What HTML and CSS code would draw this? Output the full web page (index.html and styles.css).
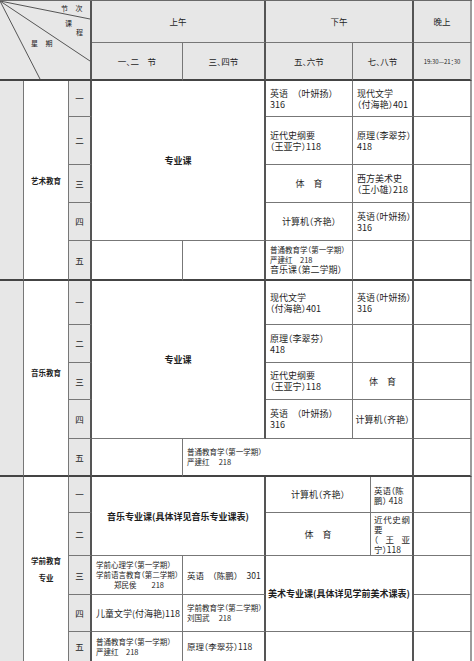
FILE: index.html
```html
<!DOCTYPE html>
<html lang="zh-CN">
<head>
<meta charset="utf-8">
<title>课程表</title>
<link rel="stylesheet" href="styles.css">
</head>
<body>
<div class="sheet">
  <!-- header -->
  <div class="c g diag s3 r2 tr tb">
    <svg class="diag-lines" viewBox="0 0 90 78" preserveAspectRatio="none">
      <line x1="0" y1="0" x2="90" y2="18"/>
      <line x1="0" y1="0" x2="90" y2="60"/>
      <line x1="0" y1="0" x2="40" y2="78"/>
    </svg>
    <span class="dl dl-jc">节 次</span>
    <span class="dl dl-k">课</span>
    <span class="dl dl-c">程</span>
    <span class="dl dl-xq">星 期</span>
  </div>
  <div class="c g ctr h s2 tr">上午</div>
  <div class="c g ctr h s3 tr">下午</div>
  <div class="c g ctr h re">晚上</div>
  <div class="c g ctr h tb">一、二　节</div>
  <div class="c g ctr h tr tb">三、四节</div>
  <div class="c g ctr h tb">五、六节</div>
  <div class="c g ctr h s2 tr tb">七、八节</div>
  <div class="c g ctr time re tb">19:30—21：30</div>

  <!-- 艺术教育 -->
  <div class="c g r5 tb"></div>
  <div class="c ctr nm r5 tb">艺术教育</div>
  <div class="c g ctr day tr">一</div>
  <div class="c ctr bold s2 r4 tr">专业课</div>
  <div class="c l">英语　（叶妍扬）<br>316</div>
  <div class="c l s2 tr">现代文学<br>（付海艳）401</div>
  <div class="c re"></div>

  <div class="c g ctr day tr">二</div>
  <div class="c l">近代史纲要<br>（王亚宁）118</div>
  <div class="c l s2 tr">原理（李翠芬）<br>418</div>
  <div class="c re"></div>

  <div class="c g ctr day tr">三</div>
  <div class="c ctr">体　育</div>
  <div class="c l s2 tr">西方美术史<br>（王小雄）218</div>
  <div class="c re"></div>

  <div class="c g ctr day tr">四</div>
  <div class="c ctr">计算机（齐艳）</div>
  <div class="c l s2 tr">英语（叶妍扬）<br>316</div>
  <div class="c re"></div>

  <div class="c g ctr day tr tb">五</div>
  <div class="c tb"></div>
  <div class="c tr tb"></div>
  <div class="c l sm tb">普通教育学（第一学期）<br>严建红　218<br><span class="big">音乐课（第二学期）</span></div>
  <div class="c s2 tr tb"></div>
  <div class="c re tb"></div>

  <!-- 音乐教育 -->
  <div class="c g r5 tb"></div>
  <div class="c ctr nm nm-up r5 tb">音乐教育</div>
  <div class="c g ctr day tr">一</div>
  <div class="c ctr bold s2 r4 tr">专业课</div>
  <div class="c l">现代文学<br>（付海艳）401</div>
  <div class="c l s2 tr">英语（叶妍扬）<br>316</div>
  <div class="c re"></div>

  <div class="c g ctr day tr">二</div>
  <div class="c l">原理（李翠芬）<br>418</div>
  <div class="c s2 tr"></div>
  <div class="c re"></div>

  <div class="c g ctr day tr">三</div>
  <div class="c l">近代史纲要<br>（王亚宁）118</div>
  <div class="c ctr s2 tr">体　育</div>
  <div class="c re"></div>

  <div class="c g ctr day tr">四</div>
  <div class="c l">英语　（叶妍扬）<br>316</div>
  <div class="c ctr s2 tr">计算机（齐艳）</div>
  <div class="c re"></div>

  <div class="c g ctr day tr tb">五</div>
  <div class="c tb"></div>
  <div class="c l sm s4 tr tb">普通教育学（第一学期）<br>严建红　 218</div>
  <div class="c re tb"></div>

  <!-- 学前教育专业 -->
  <div class="c g r5"></div>
  <div class="c ctr nm nm2 r5">学前教育<br>专业</div>
  <div class="c g ctr day tr">一</div>
  <div class="c ctr bold s2 r2 tr">音乐专业课(具体详见音乐专业课表)</div>
  <div class="c ctr s2">计算机（齐艳）</div>
  <div class="c nr tr"><div>英语（陈</div><div>鹏） 418</div></div>
  <div class="c re"></div>

  <div class="c g ctr day tr">二</div>
  <div class="c ctr s2">体　育</div>
  <div class="c nr tr"><div class="jl">近代史纲</div><div>要</div><div class="jl">（王亚</div><div>宁）118</div></div>
  <div class="c re"></div>

  <div class="c g ctr day tr">三</div>
  <div class="c l sm">学前心理学（第一学期）<br>学前语言教育（第二学期）<br><span class="ind">郑民侯　　218</span></div>
  <div class="c l mid tr">英语　（陈鹏）　301</div>
  <div class="c ctr bold s3 r2 tr">美术专业课(具体详见学前美术课表)</div>
  <div class="c re"></div>

  <div class="c g ctr day tr">四</div>
  <div class="c l">儿童文学(付海艳)118</div>
  <div class="c l sm tr">学前教育学（第二学期）<br>刘国武　 218</div>
  <div class="c re"></div>

  <div class="c g ctr day tr">五</div>
  <div class="c l sm">普通教育学（第一学期）<br>严建红　218</div>
  <div class="c l mid tr">原理（李翠芬）118</div>
  <div class="c s3 tr"></div>
  <div class="c re"></div>
</div>
</body>
</html>
```

FILE: styles.css
```css
html, body {
  margin: 0;
  padding: 0;
  background: #fff;
  overflow: hidden;
}

body {
  font-family: "Noto Sans CJK SC", "Liberation Sans", sans-serif;
  color: #1e1e1e;
  font-feature-settings: "halt";
}

.sheet {
  display: grid;
  grid-template-columns: 24px 45px 23px 91px 83px 87px 18px 43px 58px;
  grid-template-rows: 42px 38px 36px 48px 38px 38px 40px 44px 38px 37px 39px 38px 36px 43px 39px 37px 30px;
  width: 472px;
  border-top: 1px solid #6a6a6a;
}

.c {
  box-sizing: border-box;
  min-width: 0;
  overflow: hidden;
  display: flex;
  flex-direction: column;
  justify-content: center;
  border-right: 1px solid #777;
  border-bottom: 1px solid #777;
  font-size: 9px;
  line-height: 11px;
}

.g { background: #e7e7e7; }

.tr { border-right: 2px solid #555; }
.tb { border-bottom: 2px solid #444; }
.re { border-right: 2px solid #9c9c9c; }

.s2 { grid-column: span 2; }
.s3 { grid-column: span 3; }
.s4 { grid-column: span 4; }
.r2 { grid-row: span 2; }
.r4 { grid-row: span 4; }
.r5 { grid-row: span 5; }

.ctr {
  align-items: center;
  text-align: center;
}

.h { font-size: 8.5px; }
.time { font-size: 6px; }
.day { font-size: 8.5px; }

.nm {
  font-size: 7.5px;
  font-weight: 700;
}
.nm2 { line-height: 17px; }
.nm-up { padding-bottom: 12px; }

.bold {
  font-weight: 700;
  font-size: 9px;
}

.l {
  padding-left: 4px;
  white-space: nowrap;
}

.mid { font-size: 8.5px; }

.sm {
  font-size: 7.5px;
  line-height: 10px;
}
.sm .big { font-size: 9px; }
.ind { padding-left: 18px; }

.nr {
  padding: 0 2px 0 3px;
  white-space: nowrap;
  font-size: 8.5px;
  line-height: 10px;
}
.jl {
  text-align: justify;
  text-align-last: justify;
}

/* diagonal header */
.diag { position: relative; }
.diag-lines {
  position: absolute;
  left: 0;
  top: 0;
  width: 100%;
  height: 100%;
}
.diag-lines line {
  stroke: #555;
  stroke-width: 1;
}
.dl {
  position: absolute;
  font-size: 7px;
  line-height: 7px;
  white-space: nowrap;
}
.dl-jc { left: 61px; top: 4px; letter-spacing: 3px; }
.dl-k { left: 65px; top: 19px; }
.dl-c { left: 76px; top: 28px; }
.dl-xq { left: 31px; top: 39px; letter-spacing: 3px; }
```
